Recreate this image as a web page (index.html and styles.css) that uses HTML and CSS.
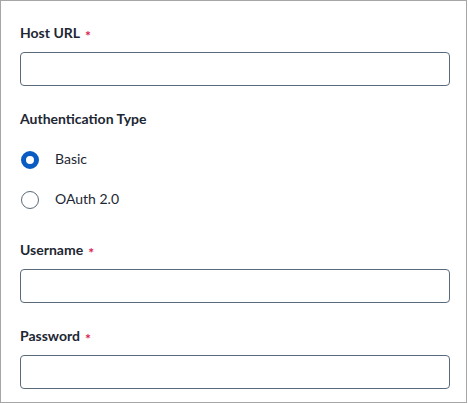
FILE: index.html
```html
<!DOCTYPE html>
<html lang="en">
<head>
<meta charset="utf-8">
<title>Connection</title>
<link rel="stylesheet" href="styles.css">
</head>
<body>
<div class="panel">
  <div class="field">
    <label class="label" for="host">Host URL<span class="req">*</span></label>
    <input class="input" id="host" type="text">
  </div>
  <div class="field group">
    <div class="label">Authentication Type</div>
    <div class="radios">
      <label class="radio-row"><input class="radio" type="radio" name="auth" checked><span class="radio-text">Basic</span></label>
      <label class="radio-row"><input class="radio" type="radio" name="auth"><span class="radio-text">OAuth 2.0</span></label>
    </div>
  </div>
  <div class="field">
    <label class="label" for="user">Username<span class="req">*</span></label>
    <input class="input" id="user" type="text">
  </div>
  <div class="field">
    <label class="label" for="pass">Password<span class="req">*</span></label>
    <input class="input" id="pass" type="password">
  </div>
</div>
</body>
</html>
```

FILE: styles.css
```css
html, body {
  margin: 0;
  padding: 0;
  background: #ffffff;
}
body {
  font-family: Lato, "Noto Sans", "Liberation Sans", sans-serif;
  color: #1d2733;
}
.panel {
  box-sizing: border-box;
  width: 467px;
  height: 403px;
  border: 1px solid #a6a6a6;
  padding: 22px 16px 0 19px;
  display: flex;
  flex-direction: column;
  gap: 23px;
}
.field {
  display: flex;
  flex-direction: column;
}
.label {
  display: block;
  font-size: 14px;
  font-weight: 700;
  line-height: 20px;
  margin-bottom: 9px;
  color: #1d2733;
}
.req {
  color: #d8204f;
  margin-left: 5px;
  font-size: 14px;
  font-weight: 700;
  position: relative;
  top: 3px;
}
.input {
  box-sizing: border-box;
  width: 430px;
  height: 34px;
  margin: 0;
  border: 1px solid #5b6a7a;
  border-radius: 4px;
  background: #fff;
  font: inherit;
  padding: 0 10px;
  outline: none;
}
.group .label {
  margin-bottom: 21px;
}
.radios {
  display: flex;
  flex-direction: column;
  gap: 20px;
  margin-bottom: 7px;
}
.radio-row {
  display: flex;
  align-items: center;
  height: 20px;
  font-size: 14px;
  color: #1d2733;
}
.radio {
  appearance: none;
  -webkit-appearance: none;
  box-sizing: border-box;
  width: 18px;
  height: 18px;
  margin: 0 16px 0 1px;
  border-radius: 50%;
  border: 1px solid #5b6a7a;
  background: #fff;
  flex: none;
}
.radio:checked {
  border: 5px solid #0a5cc2;
}
.radio-text {
  position: relative;
  top: -2px;
}
```
